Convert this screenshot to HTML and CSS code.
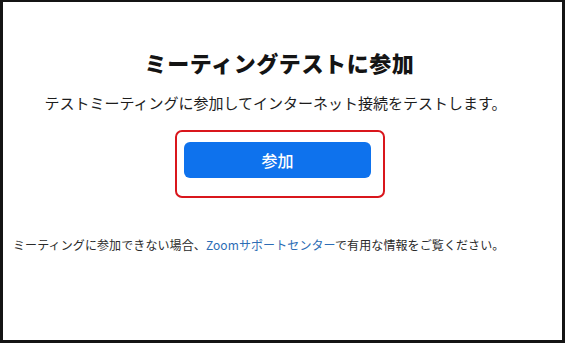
FILE: index.html
```html
<!DOCTYPE html>
<html lang="ja">
<head>
<meta charset="utf-8">
<link rel="stylesheet" href="styles.css">
</head>
<body>
<div class="frame">
  <h1 class="title">ミーティングテストに参加</h1>
  <p class="lead">テストミーティングに参加してインターネット接続をテストします。</p>
  <div class="highlight">
    <button class="join">参加</button>
  </div>
  <p class="help">ミーティングに参加できない場合、<a class="link" href="#">Zoomサポートセンター</a>で有用な情報をご覧ください。</p>
</div>
</body>
</html>
```
FILE: styles.css
```css
html, body {
  margin: 0;
  padding: 0;
  background: #ffffff;
}
.frame {
  box-sizing: border-box;
  width: 565px;
  height: 343px;
  border: 3px solid #141414;
  border-top-width: 2px;
  display: flex;
  flex-direction: column;
  align-items: center;
  font-family: "Noto Sans CJK JP", "Noto Sans", sans-serif;
  color: #1d1d1d;
}
.title {
  margin: 44px 0 0;
  padding-right: 6px;
  font-size: 22px;
  font-weight: 900;
  line-height: 32px;
  letter-spacing: 0.6px;
  color: #141414;
}
.lead {
  margin: 14px 0 0;
  padding-right: 14px;
  font-size: 15px;
  line-height: 22px;
}
.highlight {
  margin: 16px 5px 0 0;
  box-sizing: border-box;
  width: 210px;
  height: 68px;
  padding: 10px 0 0 7px;
  border: 2px solid #d9161c;
  border-radius: 7px;
  display: flex;
  justify-content: flex-start;
  align-items: flex-start;
}
.join {
  width: 187px;
  height: 36px;
  padding: 0;
  border: none;
  border-radius: 6px;
  background: #0e72ed;
  color: #ffffff;
  font-family: "Noto Sans CJK JP", "Noto Sans", sans-serif;
  font-size: 16px;
  font-weight: 500;
}
.help {
  align-self: stretch;
  margin: 37px 0 0;
  padding-left: 10px;
  font-size: 12px;
  line-height: 19px;
  letter-spacing: 0.1px;
  color: #2a2a2a;
}
.link {
  color: #2d6db5;
  text-decoration: none;
}
```
